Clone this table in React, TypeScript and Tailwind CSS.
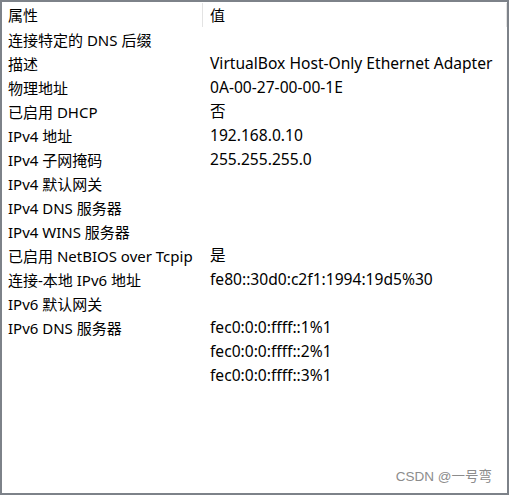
import React from "react";

const rows: [string, string][] = [
  ["连接特定的 DNS 后缀", ""],
  ["描述", "VirtualBox Host-Only Ethernet Adapter"],
  ["物理地址", "0A-00-27-00-00-1E"],
  ["已启用 DHCP", "否"],
  ["IPv4 地址", "192.168.0.10"],
  ["IPv4 子网掩码", "255.255.255.0"],
  ["IPv4 默认网关", ""],
  ["IPv4 DNS 服务器", ""],
  ["IPv4 WINS 服务器", ""],
  ["已启用 NetBIOS over Tcpip", "是"],
  ["连接-本地 IPv6 地址", "fe80::30d0:c2f1:1994:19d5%30"],
  ["IPv6 默认网关", ""],
  ["IPv6 DNS 服务器", "fec0:0:0:ffff::1%1"],
  ["", "fec0:0:0:ffff::2%1"],
  ["", "fec0:0:0:ffff::3%1"],
];

export default function App() {
  return (
    <div
      className="w-[509px] h-[495px] border-2 border-[#7d8289] bg-white text-black flex flex-col relative overflow-hidden"
      style={{ fontFamily: '"Noto Sans", "Noto Sans CJK SC", sans-serif' }}
    >
      <div className="flex h-[26px] items-center text-[15px]">
        <div className="w-[201px] pl-[6px] border-r border-[#e3e3e3] h-[24px] flex items-center">属性</div>
        <div className="flex-1 pl-[7px] border-r border-[#e3e3e3] h-[24px] flex items-center">值</div>
      </div>
      <div className="flex flex-col">
        {rows.map(([k, v], i) => (
          <div key={i} className="flex h-[24px] items-center whitespace-nowrap">
            <div className="w-[202px] pl-[6px] text-[15px]">{k}</div>
            <div className="flex-1 pl-[6px] text-[15.6px]">{v}</div>
          </div>
        ))}
      </div>
      <div
        className="absolute right-[15px] bottom-[6px] text-[13.5px] text-[#8c8c8c]"
        style={{ fontFamily: '"Liberation Sans", "Noto Sans CJK SC", sans-serif' }}
      >
        CSDN @一号弯
      </div>
    </div>
  );
}
